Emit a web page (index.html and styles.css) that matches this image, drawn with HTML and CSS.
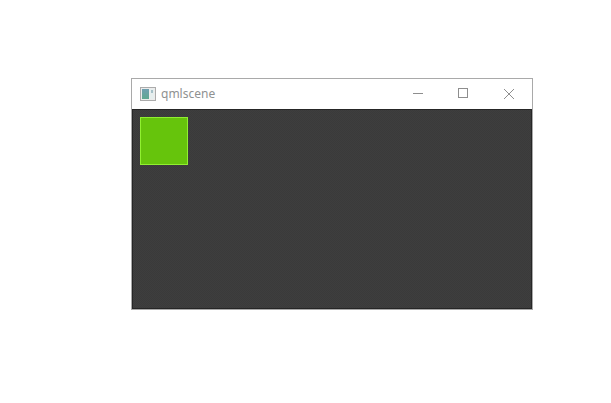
FILE: index.html
```html
<!DOCTYPE html>
<html lang="en">
<head>
  <meta charset="UTF-8">
  <title>qmlscene</title>
  <link rel="stylesheet" href="styles.css">
</head>
<body>
  <div class="window">
    <div class="titlebar">
      <svg class="app-icon" width="16" height="14" viewBox="0 0 16 14">
        <defs>
          <linearGradient id="pane" x1="0" y1="0" x2="0" y2="1">
            <stop offset="0" stop-color="#6f9fb0"/>
            <stop offset="1" stop-color="#5fa890"/>
          </linearGradient>
        </defs>
        <rect x="0.5" y="0.5" width="15" height="13" fill="#ececec" stroke="#ababab"/>
        <rect x="2" y="2" width="7" height="10" fill="url(#pane)"/>
        <rect x="10" y="2" width="4" height="10" fill="#e6eeee"/>
        <rect x="11" y="3" width="2" height="3" fill="#a5c0c8"/>
      </svg>
      <span class="title">qmlscene</span>
      <div class="controls">
        <div class="control">
          <svg width="12" height="12" viewBox="0 0 12 12"><path d="M1 5.5H11" stroke="#8e8e8e" fill="none"/></svg>
        </div>
        <div class="control">
          <svg width="12" height="12" viewBox="0 0 12 12"><rect x="1.5" y="0.5" width="9" height="9" stroke="#8e8e8e" fill="none"/></svg>
        </div>
        <div class="control control-close">
          <svg width="12" height="12" viewBox="0 0 12 12"><path d="M1 1L11 11M11 1L1 11" stroke="#8e8e8e" fill="none"/></svg>
        </div>
      </div>
    </div>
    <div class="scene">
      <div class="green-rect"></div>
    </div>
  </div>
</body>
</html>
```

FILE: styles.css
```css
body {
  margin: 0;
  padding: 78px 0 0 131px;
  background-color: #fff;
  font-family: "Noto Sans", "Liberation Sans", sans-serif;
}

.window {
  width: 402px;
  height: 232px;
  box-sizing: border-box;
  border: 1px solid #a9a9a9;
  display: flex;
  flex-direction: column;
}

.titlebar {
  height: 30px;
  display: flex;
  align-items: center;
  padding-left: 8px;
  background-color: #fff;
}

.app-icon {
  margin-right: 5px;
}

.title {
  font-size: 12px;
  color: #8f9191;
  margin-bottom: 2px;
}

.controls {
  margin-left: auto;
  padding-right: 1px;
  display: flex;
}

.control {
  width: 45px;
  height: 30px;
  display: flex;
  align-items: center;
  justify-content: center;
}

.control-close {
  margin-left: 1px;
}

.scene {
  flex: 1;
  background: repeating-conic-gradient(#3a3a3a 0 25%, #3e3e3e 0 50%) 0 0 / 2px 2px;
  border: 1px solid #262626;
  padding: 7px 7px;
}

.green-rect {
  width: 48px;
  height: 48px;
  box-sizing: border-box;
  background-color: #66c40c;
  border: 1px solid #90f030;
}
```
